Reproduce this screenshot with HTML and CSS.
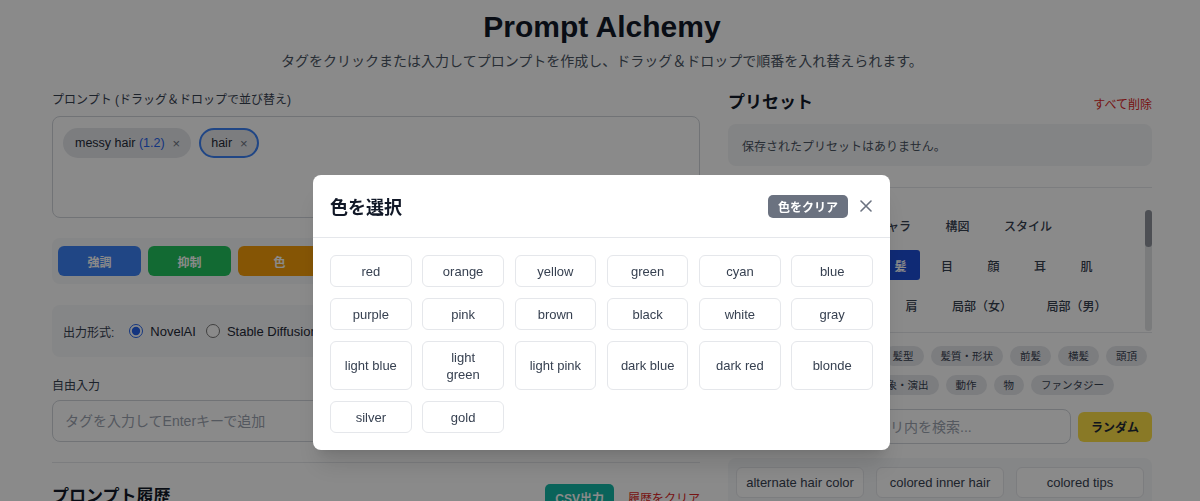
FILE: index.html
```html
<!DOCTYPE html>
<html lang="ja">
<head>
<meta charset="utf-8">
<title>Prompt Alchemy</title>
<link rel="stylesheet" href="styles.css">
</head>
<body>
<div class="page">
  <header class="hero">
    <h1 class="hero-title">Prompt Alchemy</h1>
    <p class="hero-sub">タグをクリックまたは入力してプロンプトを作成し、ドラッグ＆ドロップで順番を入れ替えられます。</p>
  </header>

  <div class="layout">
    <main class="main-col">
      <div class="field-label">プロンプト (ドラッグ＆ドロップで並び替え)</div>
      <div class="prompt-box">
        <span class="chip">messy hair <span class="chip-weight">(1.2)</span><span class="chip-x">×</span></span>
        <span class="chip chip-active">hair<span class="chip-x">×</span></span>
      </div>

      <div class="action-bar">
        <button class="act act-blue">強調</button>
        <button class="act act-green">抑制</button>
        <button class="act act-amber">色</button>
        <button class="act act-purple">コピー</button>
        <button class="act act-indigo">保存</button>
        <button class="act act-red">全削除</button>
      </div>

      <div class="format-box">
        <span class="format-label">出力形式:</span>
        <label class="radio radio-first"><input type="radio" name="fmt" checked><span>NovelAI</span></label>
        <label class="radio"><input type="radio" name="fmt"><span>Stable Diffusion</span></label>
      </div>

      <div class="field-label field-label-free">自由入力</div>
      <div class="free-row">
        <input class="text-input free-input" placeholder="タグを入力してEnterキーで追加">
        <button class="add-btn">追加</button>
      </div>

      <hr class="divider divider-left">

      <div class="history-head">
        <h2 class="section-title">プロンプト履歴</h2>
        <div class="history-actions">
          <button class="csv-btn">CSV出力</button>
          <button class="link-danger">履歴をクリア</button>
        </div>
      </div>
    </main>

    <aside class="side-col">
      <div class="preset-head">
        <h2 class="section-title">プリセット</h2>
        <button class="link-danger">すべて削除</button>
      </div>
      <div class="preset-empty">保存されたプリセットはありません。</div>

      <hr class="divider divider-right">

      <div class="cat-box">
        <div class="cat-scroll">
          <div class="tab-row tab-row-first">
            <button class="tab">品質</button>
            <button class="tab">作品名</button>
            <button class="tab">キャラ</button>
            <button class="tab">構図</button>
            <button class="tab">スタイル</button>
          </div>
          <div class="tab-row">
            <button class="tab">表情</button>
            <button class="tab">体・ポーズ</button>
            <button class="tab tab-active">髪</button>
            <button class="tab">目</button>
            <button class="tab">顔</button>
            <button class="tab">耳</button>
            <button class="tab">肌</button>
          </div>
          <div class="tab-row">
            <button class="tab">首</button>
            <button class="tab">腕</button>
            <button class="tab">手・指</button>
            <button class="tab">肩</button>
            <button class="tab">局部（女）</button>
            <button class="tab">局部（男）</button>
          </div>
          <div class="tab-row">
            <button class="tab">胸</button>
            <button class="tab">腰</button>
            <button class="tab">脚</button>
            <button class="tab">足</button>
          </div>
        </div>
        <div class="fake-scrollbar"><div class="fake-thumb"></div></div>
      </div>

      <div class="subcats">
        <span class="subchip">長さ</span>
        <span class="subchip">髪色</span>
        <span class="subchip">髪の量</span>
        <span class="subchip">髪型</span>
        <span class="subchip">髪質・形状</span>
        <span class="subchip">前髪</span>
        <span class="subchip">横髪</span>
        <span class="subchip">頭頂</span>
        <span class="subchip">ヘアアレンジ</span>
        <span class="subchip">飾り</span>
        <span class="subchip">現象・演出</span>
        <span class="subchip">動作</span>
        <span class="subchip">物</span>
        <span class="subchip">ファンタジー</span>
      </div>

      <div class="search-row">
        <button class="scope-select">全カテゴリ ▾</button>
        <input class="text-input search-input" placeholder="カテゴリ内を検索...">
        <button class="random-btn">ランダム</button>
      </div>

      <div class="tag-grid">
        <button class="tag-btn">alternate hair color</button>
        <button class="tag-btn">colored inner hair</button>
        <button class="tag-btn">colored tips</button>
        <button class="tag-btn">gradient hair</button>
        <button class="tag-btn">multicolored hair</button>
        <button class="tag-btn">streaked hair</button>
      </div>
    </aside>
  </div>
</div>

<div class="overlay">
  <div class="modal">
    <div class="modal-head">
      <h3 class="modal-title">色を選択</h3>
      <div class="modal-tools">
        <button class="clear-color">色をクリア</button>
        <button class="close-btn" aria-label="閉じる">
          <svg width="12" height="12" viewBox="0 0 12 12"><path d="M1 1L11 11M11 1L1 11" stroke="currentColor" stroke-width="1.6" stroke-linecap="round" fill="none"/></svg>
        </button>
      </div>
    </div>
    <div class="modal-body">
      <button class="color-btn">red</button>
      <button class="color-btn">orange</button>
      <button class="color-btn">yellow</button>
      <button class="color-btn">green</button>
      <button class="color-btn">cyan</button>
      <button class="color-btn">blue</button>
      <button class="color-btn">purple</button>
      <button class="color-btn">pink</button>
      <button class="color-btn">brown</button>
      <button class="color-btn">black</button>
      <button class="color-btn">white</button>
      <button class="color-btn">gray</button>
      <button class="color-btn">light blue</button>
      <button class="color-btn">light green</button>
      <button class="color-btn">light pink</button>
      <button class="color-btn">dark blue</button>
      <button class="color-btn">dark red</button>
      <button class="color-btn">blonde</button>
      <button class="color-btn">silver</button>
      <button class="color-btn">gold</button>
    </div>
  </div>
</div>
</body>
</html>
```

FILE: styles.css
```css
* { box-sizing: border-box; }

html, body {
  margin: 0;
  height: 501px;
  overflow: hidden;
}

body {
  font-family: "Liberation Sans", "Noto Sans CJK JP", sans-serif;
  color: #1f2937;
  background: #ffffff;
}

button, input {
  font-family: inherit;
}

button {
  cursor: pointer;
}

.page {
  width: 1100px;
  margin-left: 52px;
}

/* header */
.hero {
  text-align: center;
  padding-top: 9px;
}

.hero-title {
  margin: 0;
  font-size: 30px;
  line-height: 36px;
  font-weight: 700;
  color: #111827;
}

.hero-sub {
  margin: 6px 0 0;
  font-size: 14px;
  line-height: 20px;
  color: #4b5563;
}

.layout {
  display: grid;
  grid-template-columns: 648px 424px;
  column-gap: 28px;
  margin-top: 20px;
  align-items: start;
}

/* left column */
.field-label {
  font-size: 12px;
  line-height: 18px;
  color: #374151;
}

.prompt-box {
  margin-top: 7px;
  min-height: 102px;
  border: 1px solid #d1d5db;
  border-radius: 8px;
  padding: 11px 10px;
  display: flex;
  flex-wrap: wrap;
  align-content: flex-start;
  gap: 8px;
}

.chip {
  display: inline-flex;
  align-items: center;
  height: 30px;
  padding: 0 9px 0 10px;
  border: 2px solid transparent;
  border-radius: 999px;
  background: #e5e7eb;
  font-size: 12.5px;
  color: #1f2937;
  white-space: pre;
}

.chip-active {
  border-color: #3b82f6;
}

.chip-weight {
  color: #2563eb;
}

.chip-x {
  margin-left: 8px;
  color: #6b7280;
  font-size: 13px;
}

.action-bar {
  margin-top: 20px;
  background: #f6f7f9;
  border-radius: 8px;
  padding: 8px 6px;
  display: flex;
  gap: 7px;
}

.act {
  width: 83px;
  height: 30px;
  border: 0;
  border-radius: 6px;
  color: #ffffff;
  font-size: 12px;
  font-weight: 700;
}

.act-blue { background: #3b82f6; }
.act-green { background: #22c55e; }
.act-amber { background: #f59e0b; }
.act-purple { background: #8b5cf6; }
.act-indigo { background: #6366f1; }
.act-red { background: #ef4444; }

.format-box {
  margin-top: 21px;
  height: 52px;
  background: #f6f7f9;
  border-radius: 8px;
  display: flex;
  align-items: center;
  padding: 0 11px;
}

.format-label {
  font-size: 12px;
  color: #374151;
}

.radio {
  display: inline-flex;
  align-items: center;
  gap: 7px;
  margin-left: 10px;
  font-size: 13px;
  color: #1f2937;
}

.radio-first {
  margin-left: 15px;
}

.radio input {
  width: 14px;
  height: 14px;
  margin: 0;
  accent-color: #2563eb;
}

.field-label-free {
  margin-top: 20px;
}

.free-row {
  margin-top: 5px;
  display: flex;
  gap: 8px;
}

.text-input {
  border: 1px solid #d1d5db;
  border-radius: 8px;
  background: #ffffff;
  padding: 0 12px;
  font-size: 14px;
  color: #1f2937;
  outline: none;
}

.text-input::placeholder {
  color: #9ca3af;
}

.free-input {
  flex: 1;
  height: 42px;
}

.add-btn {
  width: 70px;
  border: 0;
  border-radius: 8px;
  background: #3b82f6;
  color: #ffffff;
  font-size: 13px;
  font-weight: 700;
}

.divider {
  margin: 0;
  border: 0;
  border-top: 1px solid #e5e7eb;
}

.divider-left {
  margin-top: 20px;
}

.history-head {
  margin-top: 21px;
  display: flex;
  justify-content: space-between;
  align-items: center;
}

.section-title {
  margin: 0;
  font-size: 17px;
  line-height: 24px;
  font-weight: 700;
  color: #111827;
}

.history-actions {
  display: flex;
  align-items: center;
  gap: 14px;
}

.csv-btn {
  height: 26px;
  padding: 0 10px;
  border: 0;
  border-radius: 5px;
  background: #14b8a6;
  color: #ffffff;
  font-size: 12px;
  font-weight: 700;
}

.link-danger {
  border: 0;
  background: none;
  padding: 0;
  font-size: 12px;
  color: #dc2626;
}

/* right column */
.preset-head {
  height: 24px;
  display: flex;
  justify-content: space-between;
  align-items: center;
}

.preset-empty {
  margin-top: 9px;
  height: 42px;
  background: #f3f4f6;
  border-radius: 8px;
  padding: 0 14px;
  display: flex;
  align-items: center;
  font-size: 12px;
  color: #4b5563;
}

.divider-right {
  margin-top: 21px;
}

.cat-box {
  position: relative;
  margin-top: 18px;
  height: 127px;
  border-bottom: 1px solid #e5e7eb;
}

.cat-scroll {
  height: 126px;
  overflow: hidden;
  padding: 4px 10px 0 0;
  display: flex;
  flex-direction: column;
  gap: 10px;
}

.fake-scrollbar {
  position: absolute;
  right: 0;
  top: 4px;
  bottom: 1px;
  width: 7px;
  border-radius: 4px;
  background: #e2e3e6;
}

.fake-thumb {
  height: 37px;
  border-radius: 4px;
  background: #8e939c;
}

.tab-row {
  display: flex;
  gap: 6.5px;
  flex-shrink: 0;
}

.tab-row-first {
  padding-left: 4px;
}

.tab {
  height: 30px;
  padding: 0 14px;
  border: 0;
  border-radius: 3px;
  background: none;
  font-size: 12px;
  font-weight: 500;
  color: #374151;
  white-space: nowrap;
}

.tab-active {
  background: #1d4ed8;
  color: #ffffff;
  font-weight: 700;
}

.subcats {
  margin-top: 13px;
  display: flex;
  flex-wrap: wrap;
  gap: 9px 7px;
}

.subchip {
  height: 20px;
  line-height: 20px;
  padding: 0 10px;
  border-radius: 999px;
  background: #e5e7eb;
  font-size: 10.5px;
  color: #374151;
  white-space: nowrap;
}

.search-row {
  margin-top: 14px;
  display: flex;
  align-items: center;
  gap: 7px;
}

.scope-select {
  width: 100px;
  height: 35px;
  border: 1px solid #d1d5db;
  border-radius: 8px;
  background: #ffffff;
  font-size: 12px;
  color: #374151;
}

.search-input {
  flex: 1;
  height: 35px;
}

.random-btn {
  width: 74px;
  height: 30px;
  border: 0;
  border-radius: 6px;
  background: #fde047;
  color: #1f2937;
  font-size: 12px;
  font-weight: 700;
}

.tag-grid {
  margin-top: 14px;
  background: #f6f7f9;
  border-radius: 8px;
  padding: 9px 8px;
  display: grid;
  grid-template-columns: repeat(3, 1fr);
  gap: 12px;
}

.tag-btn {
  height: 31px;
  background: #ffffff;
  border: 1px solid #e5e7eb;
  border-radius: 6px;
  font-size: 13px;
  color: #374151;
}

/* modal */
.overlay {
  position: fixed;
  inset: 0;
  background: rgba(0, 0, 0, 0.46);
  display: flex;
  justify-content: center;
  align-items: flex-start;
  padding: 175px 0 0 3px;
}

.modal {
  width: 577px;
  background: #ffffff;
  border-radius: 8px;
  box-shadow: 0 20px 25px -5px rgba(0, 0, 0, 0.12), 0 8px 10px -6px rgba(0, 0, 0, 0.1);
}

.modal-head {
  height: 63px;
  padding: 0 17px;
  display: flex;
  align-items: center;
  justify-content: space-between;
  border-bottom: 1px solid #e5e7eb;
}

.modal-title {
  margin: 0;
  font-size: 18px;
  font-weight: 700;
  color: #111827;
}

.modal-tools {
  display: flex;
  align-items: center;
  gap: 11px;
}

.clear-color {
  height: 23px;
  padding: 0 10px;
  border: 0;
  border-radius: 5px;
  background: #6b7280;
  color: #ffffff;
  font-size: 12px;
  font-weight: 700;
}

.close-btn {
  display: flex;
  align-items: center;
  justify-content: center;
  width: 14px;
  height: 14px;
  padding: 0;
  border: 0;
  background: none;
  color: #6b7280;
}

.modal-body {
  padding: 17px;
  display: grid;
  grid-template-columns: repeat(6, 1fr);
  gap: 11px 10.6px;
}

.color-btn {
  padding: 6.5px 12px;
  line-height: 17px;
  font-size: 13px;
  background: #ffffff;
  border: 1px solid #e5e7eb;
  border-radius: 6px;
  color: #374151;
}
```
